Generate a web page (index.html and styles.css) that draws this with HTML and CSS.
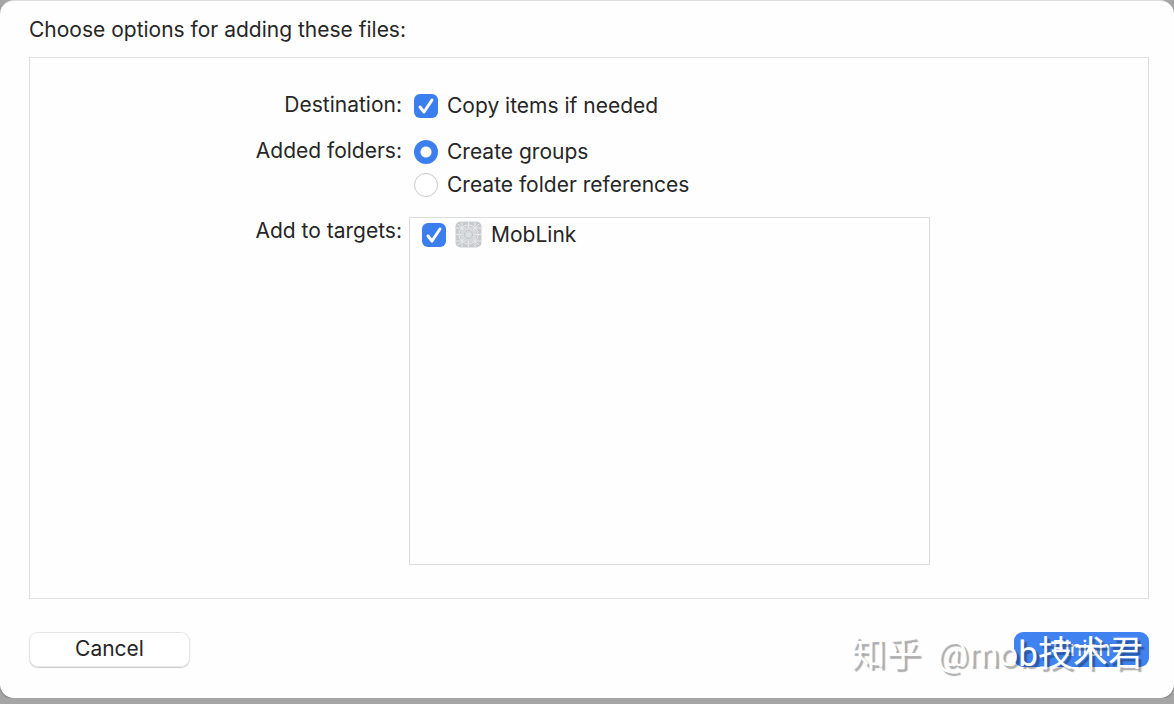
FILE: index.html
```html
<!DOCTYPE html>
<html lang="en">
<head>
    <meta charset="UTF-8">
    <meta name="viewport" content="width=device-width, initial-scale=1.0">
    <title>Add Files</title>
    <link rel="stylesheet" href="styles.css">
</head>
<body>

<form class="dialog">
    <h1>Choose options for adding these files:</h1>

    <div class="panel">
        <span class="label" id="destination">Destination:</span>
        <div class="controls" role="group" aria-labelledby="destination">
            <label class="choice"><input type="checkbox" checked>Copy items if needed</label>
        </div>

        <span class="label" id="folders">Added folders:</span>
        <div class="controls" role="radiogroup" aria-labelledby="folders">
            <label class="choice"><input type="radio" name="folders" checked>Create groups</label>
            <label class="choice"><input type="radio" name="folders">Create folder references</label>
        </div>

        <span class="label list-label" id="targets">Add to targets:</span>
        <div class="targets" role="group" aria-labelledby="targets">
            <label class="choice">
                <input type="checkbox" checked>
                <svg class="app-icon" viewBox="0 0 27 27" aria-hidden="true">
                    <rect x="0.5" y="0.5" width="26" height="26" rx="5" fill="#c8cbce"/>
                    <g fill="none" stroke="#e6e8ea" stroke-width="1">
                        <path d="M7 1v25M13.5 1v6M13.5 20v6M20 1v25M1 7h25M1 13.5h6M20 13.5h6M1 20h25"/>
                        <path d="M3 3l21 21M24 3L3 24"/>
                        <circle cx="13.5" cy="13.5" r="9.5"/>
                    </g>
                    <circle cx="13.5" cy="13.5" r="6.5" fill="#d7dadd"/>
                    <circle cx="13.5" cy="13.5" r="4" fill="none" stroke="#b4b9be" stroke-dasharray="2 1"/>
                    <circle cx="13.5" cy="13.5" r="2" fill="#dfe1e3"/>
                </svg>
                MobLink
            </label>
        </div>
    </div>

    <div class="actions">
        <button type="button" class="cancel">Cancel</button>
        <button type="submit" class="finish">Finish</button>
    </div>

    <div class="watermark" lang="zh-CN">
        <span>知乎</span>
        <span>@mob技术君</span>
    </div>
</form>

</body>
</html>
```
FILE: styles.css
```css
* {
    box-sizing: border-box;
}
body {
    margin: 0;
    background-color: #a5a5a5;
    color: #262626;
    font-family: Inter, "Liberation Sans", "Noto Sans CJK SC", sans-serif;
    font-size: 21px;
    line-height: 26px;
}
.dialog {
    position: relative;
    display: flex;
    flex-direction: column;
    min-height: calc(100vh - 6px);
    padding: 16px 25px 31px 29px;
    background-color: #fefefe;
    border-top: 1px solid #dcdcdc;
    border-radius: 14px;
    box-shadow: 0 1px 2px #777;
}
h1 {
    margin: 0 0 14px;
    font-size: 21px;
    font-weight: 400;
}
.panel {
    flex: 1;
    display: grid;
    grid-template-columns: 372px 1fr;
    grid-template-rows: auto auto 1fr;
    column-gap: 7px;
    padding: 34px 218px 33px 0;
    border: 1px solid #dfdfdf;
}
.label {
    text-align: right;
}
.list-label {
    padding-top: 1px;
}
.controls {
    padding: 1px 0 19px 5px;
}
.choice {
    display: flex;
    align-items: center;
    gap: 9px;
}
.choice + .choice {
    margin-top: 7px;
}
input {
    appearance: none;
    flex: none;
    width: 24px;
    height: 24px;
    margin: 0;
    border: 1px solid #c8c8c8;
    background-color: #fff;
}
input[type="checkbox"] {
    border-radius: 6px;
}
input[type="radio"] {
    border-radius: 50%;
}
input:checked {
    border: none;
    background: #3b7fee center / 24px 24px no-repeat;
}
input[type="checkbox"]:checked {
    background-image: url("data:image/svg+xml,%3Csvg xmlns='http://www.w3.org/2000/svg' viewBox='0 0 24 24'%3E%3Cpath d='M6 13l4 5L18 6' fill='none' stroke='white' stroke-width='3' stroke-linecap='round' stroke-linejoin='round'/%3E%3C/svg%3E");
}
input[type="radio"]:checked {
    background-image: radial-gradient(circle, #fff 5px, transparent 6px);
}
.targets {
    padding: 3px 12px;
    border: 1px solid #dcdcdc;
}
.app-icon {
    width: 27px;
    height: 27px;
}
.actions {
    display: flex;
    justify-content: space-between;
    margin-top: 33px;
}
button {
    height: 35px;
    padding: 0 0 2px;
    border: none;
    border-radius: 9px;
    font: inherit;
}
.cancel {
    width: 161px;
    background-color: #fff;
    color: #262626;
    box-shadow: 0 0 0 1px #e6e6e6 inset, 0 1px 1px #ccc;
}
.finish {
    width: 135px;
    background-color: #3f82f0;
    color: #fff;
}
.watermark {
    position: absolute;
    right: 31px;
    bottom: 18px;
    display: flex;
    gap: 16px;
    color: #fff;
    font-family: Roboto, "Noto Sans CJK SC", sans-serif;
    font-size: 35px;
    line-height: 50px;
    text-shadow: 3px 3px 1px rgba(0, 0, 0, 0.32);
    pointer-events: none;
}
```
